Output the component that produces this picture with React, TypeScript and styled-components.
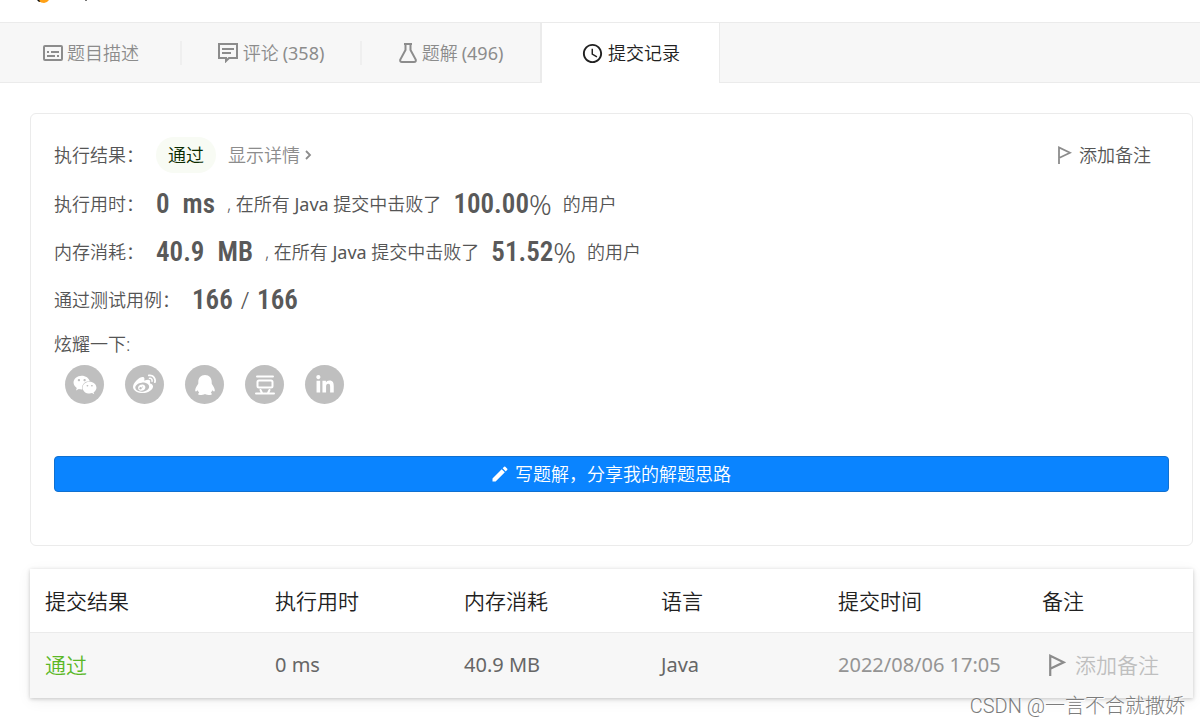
import React from 'react';
import styled, { createGlobalStyle } from 'styled-components';
import { FaWeixin, FaWeibo, FaLinkedinIn } from 'react-icons/fa';
import { MdEdit, MdAccessTime } from 'react-icons/md';

const sans = '"Noto Sans", "Noto Sans CJK SC", sans-serif';

const GlobalStyle = createGlobalStyle`
  * { box-sizing: border-box; }
  body {
    margin: 0;
    background: #fff;
    color: #555;
    font: 350 18px/24px ${sans};
  }
  button { font: inherit; color: inherit; cursor: pointer; }
`;

const Page = styled.div`
  position: relative;
  padding-bottom: 24px;
`;

const TopBar = styled.header`
  height: 22px;
  padding-left: 36px;
  svg { display: block; }
`;

const Tabs = styled.nav`
  display: flex;
  height: 61px;
  background: #f7f7f7;
  box-shadow: inset 0 1px #ebebeb, inset 0 -1px #ebebeb;
`;

const Tab = styled.button<{ $active?: boolean; $divider?: boolean }>`
  display: flex;
  align-items: center;
  justify-content: center;
  gap: 4px;
  width: 180px;
  padding: 0 0 0 2px;
  border: 0;
  color: #8c8c8c;
  background: ${p => (p.$divider
    ? 'linear-gradient(#efefef, #efefef) left center / 2px 24px no-repeat'
    : 'transparent')};
  ${p => p.$active && `
    padding: 0;
    border: solid #ebebeb;
    border-width: 1px 1px 0 2px;
    background: #fff;
    color: #212121;
  `}
`;

const Latin = styled.span`
  font-weight: 400;
`;

const Main = styled.main`
  padding: 30px 7px 0 30px;
`;

const Card = styled.section`
  border: 1px solid #ebebeb;
  border-radius: 6px;
  padding: 23px 23px 53px;
`;

const Row = styled.div`
  display: flex;
  align-items: center;
  height: 48px;
`;

const TopRow = styled(Row)`
  height: 36px;
  margin-bottom: 7px;
`;

const Label = styled.span<{ $wide?: boolean }>`
  width: ${p => (p.$wide ? 138 : 102)}px;
  white-space: nowrap;
`;

const Pill = styled.span`
  padding: 6px 12px;
  border-radius: 18px;
  background: #f8fbf4;
  color: #0b2b00;
`;

const DetailButton = styled.button`
  display: flex;
  align-items: center;
  gap: 4px;
  margin-left: 12px;
  padding: 0;
  border: 0;
  background: none;
  color: #8c8c8c;
`;

const NoteButton = styled.button<{ $muted?: boolean }>`
  display: flex;
  align-items: center;
  gap: ${p => (p.$muted ? 9 : 7)}px;
  margin-left: ${p => (p.$muted ? '7px' : 'auto')};
  margin-right: ${p => (p.$muted ? 0 : 18)}px;
  padding: 0;
  border: 0;
  background: none;
  font-size: ${p => (p.$muted ? 21 : 18)}px;
  font-weight: 350;
  color: ${p => (p.$muted ? '#bfbfbf' : '#555')};
  svg { color: #8c8c8c; }
`;

const Figure = styled.strong`
  display: flex;
  gap: 13px;
  font: 600 27px/36px "Roboto Condensed", Roboto, sans-serif;
  color: #595959;
`;

const Percent = styled.span`
  font-size: 28px;
  font-weight: 300;
  line-height: 36px;
  margin-right: 11px;
`;

const Phrase = styled.span`
  margin: 0 12px;
`;

const Slash = styled.span`
  margin: 0 8px;
  font-size: 24px;
`;

const Brag = styled.p`
  margin: 8px 0 9px;
`;

const Shares = styled.div`
  display: flex;
  gap: 21px;
  padding-left: 11px;
  margin-bottom: 52px;
`;

const Share = styled.button`
  display: grid;
  place-items: center;
  width: 39px;
  height: 39px;
  padding: 0;
  border: 0;
  border-radius: 50%;
  background: #bfbfbf;
  color: #fff;
`;

const WriteButton = styled.button`
  display: flex;
  align-items: center;
  justify-content: center;
  gap: 5px;
  width: 100%;
  height: 36px;
  padding: 0 2px 0 0;
  border: 1px solid #1070d0;
  border-radius: 4px;
  background: #0a84ff;
  color: #fff;
`;

const Table = styled.table`
  width: 100%;
  margin-top: 23px;
  table-layout: fixed;
  border-collapse: collapse;
  font-size: 20px;
  line-height: 28px;
  text-align: left;
  box-shadow: 0 1px 4px rgba(0, 0, 0, 0.2), 0 3px 14px rgba(0, 0, 0, 0.06);
`;

const Th = styled.th<{ $w?: number }>`
  width: ${p => (p.$w ? `${p.$w}px` : 'auto')};
  height: 63px;
  padding: 2px 0 0 15px;
  font-size: 21px;
  font-weight: 350;
  color: #212121;
`;

const Td = styled.td`
  height: 66px;
  padding: 0 0 0 15px;
  border-top: 1px solid #ebebeb;
  background: #f7f7f7;
  font-weight: 400;
  color: #666;
  white-space: nowrap;
`;

const Time = styled.time`
  color: #949494;
`;

const ResultLink = styled.a`
  font-size: 21px;
  font-weight: 350;
  color: #5ab726;
  text-decoration: none;
`;

const Watermark = styled.div`
  position: absolute;
  right: 15px;
  bottom: 4px;
  font: 300 20px/24px Roboto, "Noto Sans CJK SC", sans-serif;
  color: #7c7c7c;
  text-shadow: 1px 1px #fff;
`;

const DescIcon = () => (
  <svg width="20" height="16" viewBox="0 0 20 16" fill="none" stroke="currentColor" strokeWidth="2">
    <rect x="1" y="1" width="18" height="14" rx="1" />
    <path d="M4 7h2M8 7h8M4 11h8M14 11h2" />
  </svg>
);

const CommentIcon = () => (
  <svg width="21" height="20" viewBox="0 0 21 20" fill="none" stroke="currentColor" strokeWidth="2">
    <path d="M1 1h18v14h-8l-3 3v-3H1z" />
    <path d="M4 6h12M4 10h9" />
  </svg>
);

const FlaskIcon = () => (
  <svg width="19" height="20" viewBox="0 0 19 20" fill="none" stroke="currentColor" strokeWidth="2">
    <path d="M5 1h8M6.500 1v6L1.300 16.500Q.7 19 3 19h12q2.300 0 1.700-2.500L11.500 7V1" />
  </svg>
);

const FlagIcon = ({ size = 18 }: { size?: number }) => (
  <svg width={size * 14 / 18} height={size} viewBox="0 0 14 18" fill="none" stroke="currentColor" strokeWidth="1.800">
    <path d="M1 18V1.500l11 5.300L1 12" />
  </svg>
);

const PenguinIcon = () => (
  <svg width="22" height="22" viewBox="0 0 22 22" fill="currentColor">
    <path d="M11 1C6.700 1 4.300 4 4.300 8v1.500C3.800 11 1.500 13.300 1.200 16c-.1 1.700.8 2 2.400.2.4 1 .9 1.800 1.600 2.500-1.700.8-1.400 2.300.8 2.300 2 0 3.800-.3 5-1.100 1.200.8 3 1.100 5 1.100 2.200 0 2.500-1.500.8-2.300.7-.7 1.200-1.500 1.600-2.500 1.600 1.800 2.500 1.500 2.400-.2-.3-2.700-2.600-5-3.100-6.500V8C17.700 4 15.300 1 11 1z" />
  </svg>
);

const BeanIcon = () => (
  <svg width="20" height="20" viewBox="0 0 20 20" fill="none" stroke="currentColor" strokeWidth="2" strokeLinecap="round">
    <path d="M2 1.500h16M1 18.500h18M5.500 15l1.500 3M14.500 15L13 18" />
    <rect x="2.500" y="5.500" width="15" height="7" rx="1.500" />
  </svg>
);

const submissions = [
  { result: '通过', time: '0 ms', memory: '40.9 MB', lang: 'Java', date: '2022/08/06 17:05' },
];

export default function App() {
  return (
    <Page>
      <GlobalStyle />
      <TopBar>
        <svg width="60" height="4" viewBox="0 0 60 4" aria-hidden="true">
          <path d="M1 0h4v2H3z" fill="#111" />
          <path d="M4 0h9q-2 3-5 3Q5 3 3 1z" fill="#ffa116" />
          <path d="M49 0h2v1h-2z" fill="#777" />
        </svg>
      </TopBar>
      <Tabs>
        <Tab><DescIcon />题目描述</Tab>
        <Tab $divider><CommentIcon />评论 <Latin>(358)</Latin></Tab>
        <Tab $divider><FlaskIcon />题解 <Latin>(496)</Latin></Tab>
        <Tab $active><MdAccessTime size={23} />提交记录</Tab>
      </Tabs>
      <Main>
        <Card>
          <TopRow>
            <Label>执行结果：</Label>
            <Pill>通过</Pill>
            <DetailButton>
              显示详情
              <svg width="8" height="10" viewBox="0 0 8 10" fill="none" stroke="currentColor" strokeWidth="1.800">
                <path d="M2 1l4 4-4 4" />
              </svg>
            </DetailButton>
            <NoteButton><FlagIcon />添加备注</NoteButton>
          </TopRow>
          <Row>
            <Label>执行用时：</Label>
            <Figure><span>0</span> <span>ms</span></Figure>
            <Phrase>, 在所有 <Latin>Java</Latin> 提交中击败了</Phrase>
            <Figure>100.00</Figure><Percent>%</Percent>
            <span>的用户</span>
          </Row>
          <Row>
            <Label>内存消耗：</Label>
            <Figure><span>40.9</span> <span>MB</span></Figure>
            <Phrase>, 在所有 <Latin>Java</Latin> 提交中击败了</Phrase>
            <Figure>51.52</Figure><Percent>%</Percent>
            <span>的用户</span>
          </Row>
          <Row>
            <Label $wide>通过测试用例：</Label>
            <Figure>166</Figure><Slash>/</Slash><Figure>166</Figure>
          </Row>
          <Brag>炫耀一下:</Brag>
          <Shares>
            <Share aria-label="微信"><FaWeixin size={24} /></Share>
            <Share aria-label="微博"><FaWeibo size={23} /></Share>
            <Share aria-label="QQ"><PenguinIcon /></Share>
            <Share aria-label="豆瓣"><BeanIcon /></Share>
            <Share aria-label="LinkedIn"><FaLinkedinIn size={20} /></Share>
          </Shares>
          <WriteButton><MdEdit size={20} />写题解，分享我的解题思路</WriteButton>
        </Card>
        <Table>
          <thead>
            <tr>
              <Th $w={230}>提交结果</Th>
              <Th $w={189}>执行用时</Th>
              <Th $w={197}>内存消耗</Th>
              <Th $w={177}>语言</Th>
              <Th $w={204}>提交时间</Th>
              <Th>备注</Th>
            </tr>
          </thead>
          <tbody>
            {submissions.map(s => (
              <tr key={s.date}>
                <Td><ResultLink href="#detail">{s.result}</ResultLink></Td>
                <Td>{s.time}</Td>
                <Td>{s.memory}</Td>
                <Td>{s.lang}</Td>
                <Td><Time>{s.date}</Time></Td>
                <Td><NoteButton $muted><FlagIcon size={22} />添加备注</NoteButton></Td>
              </tr>
            ))}
          </tbody>
        </Table>
      </Main>
      <Watermark>CSDN @一言不合就撒娇</Watermark>
    </Page>
  );
}
